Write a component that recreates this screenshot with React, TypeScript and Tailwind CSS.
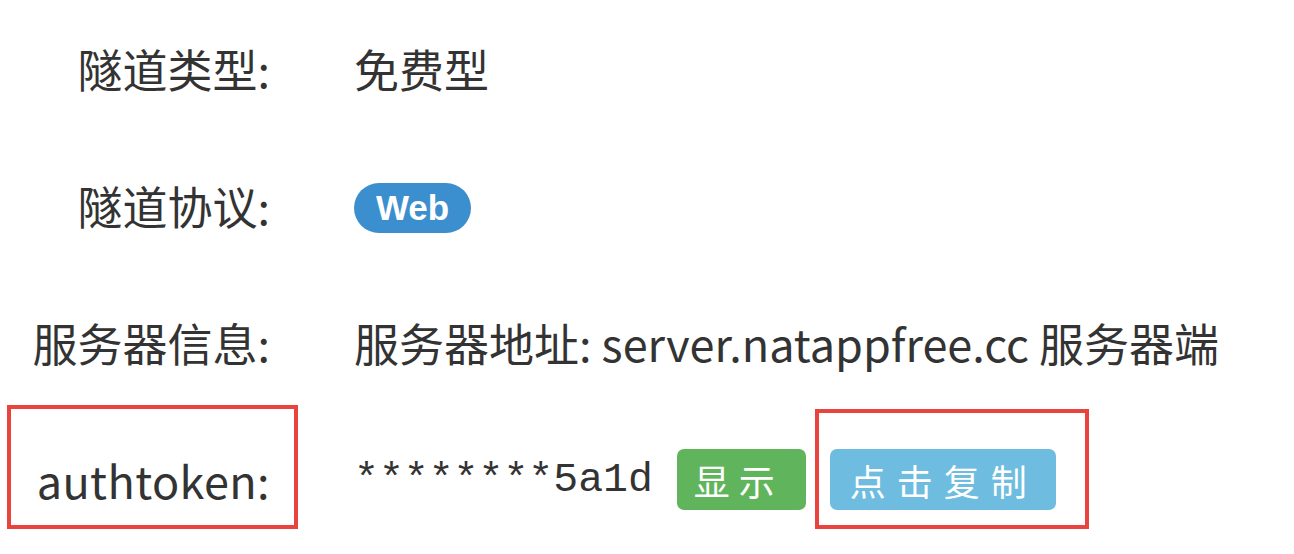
import React from "react";

type Row = {
  label: string;
  value: React.ReactNode;
  boxed?: boolean;
};

const cjk = "font-['Noto_Sans_CJK_SC','Noto_Sans',sans-serif]";

const Badge = ({ text }: { text: string }) => (
  <span className="inline-flex h-[50px] w-[117px] items-center justify-center rounded-full bg-[#3b8fcf] font-['Liberation_Sans',sans-serif] text-[35px] font-bold text-white">
    {text}
  </span>
);

const TokenValue = () => (
  <div className="flex items-center">
    <span className="font-['Liberation_Mono',monospace] text-[41.5px] text-[#333]">
      ********5a1d
    </span>
    <button className="ml-[24px] flex h-[61px] w-[129px] items-center rounded-[7px] bg-[#60b55c] pl-[17px] text-[36px] tracking-[9px] text-white">
      显示
    </button>
    {/* 复制按钮外的红框 */}
    <div className="relative ml-[24px]">
      <button className="flex h-[61px] w-[226px] items-center rounded-[7px] bg-[#6ebde0] pl-[20px] text-[36px] tracking-[11px] text-white">
        点击复制
      </button>
      <span className="pointer-events-none absolute -left-[15px] -top-[40px] h-[120px] w-[274px] border-[4px] border-[#e8433d]" />
    </div>
  </div>
);

const rows: Row[] = [
  { label: "隧道类型:", value: "免费型" },
  { label: "隧道协议:", value: <Badge text="Web" /> },
  {
    label: "服务器信息:",
    value: "服务器地址: server.natappfree.cc 服务器端",
  },
  { label: "authtoken:", value: <TokenValue />, boxed: true },
];

export default function App() {
  return (
    <div className={`h-[554px] w-[1294px] overflow-hidden bg-white text-[#333] ${cjk}`}>
      <div className="w-[1240px]">
        {rows.map((r) => (
          <div key={r.label} className="relative flex h-[137px] items-center">
            <div
              className={`relative w-[270px] shrink-0 text-right text-[45px] leading-none ${
                r.boxed ? "tracking-[0.4px]" : ""
              }`}
            >
              {r.label}
              {r.boxed && (
                <span className="pointer-events-none absolute -top-[52px] left-[7px] h-[124px] w-[291px] border-[4px] border-[#e8433d]" />
              )}
            </div>
            <div className="ml-[84px] whitespace-nowrap text-[45px] leading-none">
              {r.value}
            </div>
          </div>
        ))}
      </div>
    </div>
  );
}
